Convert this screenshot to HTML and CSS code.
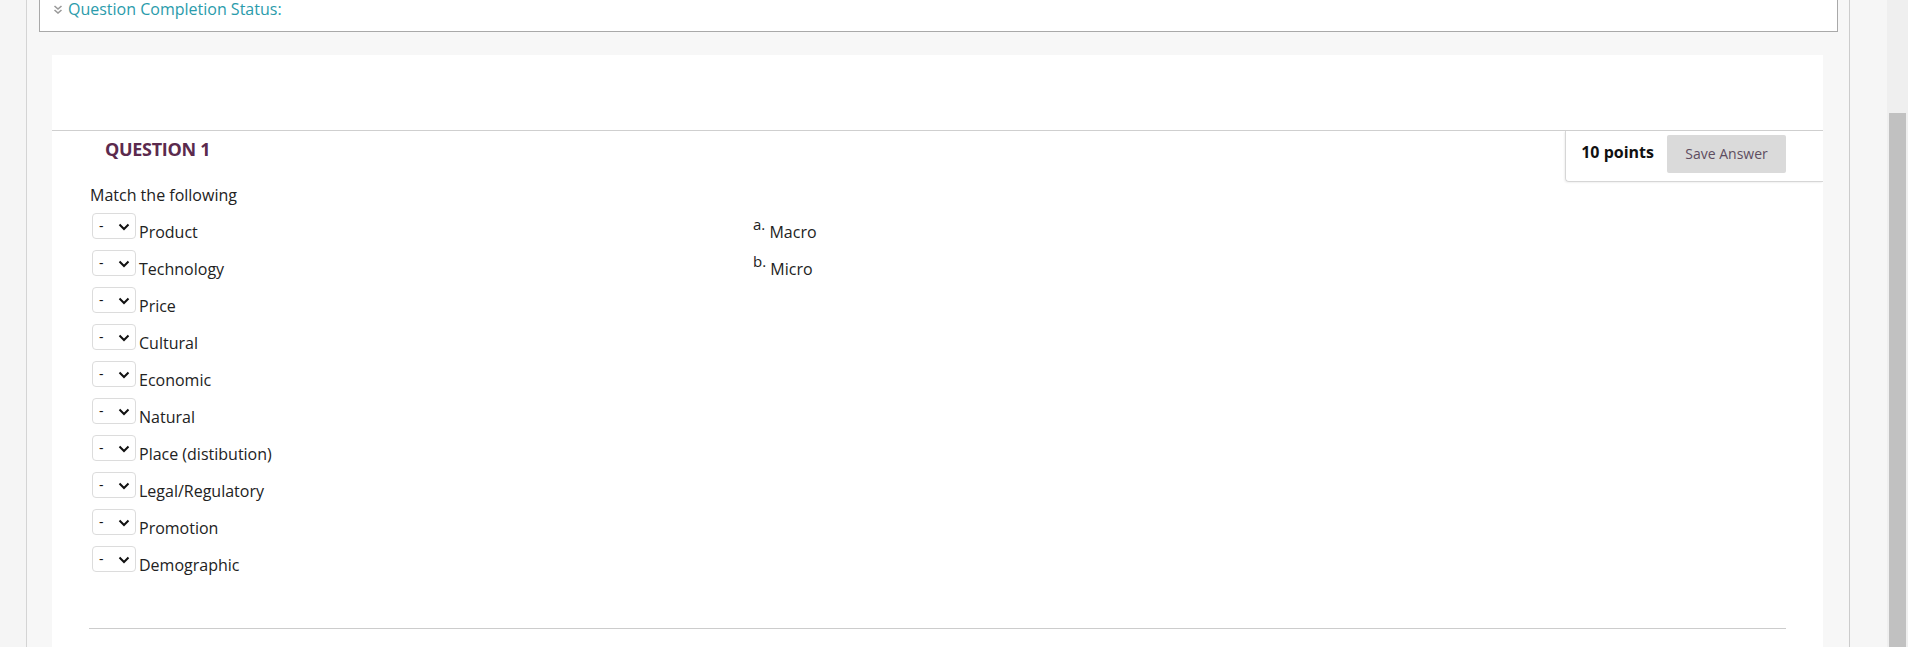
FILE: index.html
```html
<!DOCTYPE html>
<html lang="en">
<head>
<meta charset="utf-8">
<title>Question 1</title>
<link rel="stylesheet" href="styles.css">
</head>
<body>
<div class="frame">
  <div class="left-strip"></div>
  <main class="main">
    <div class="status-box">
      <div class="status-line">
        <svg class="status-icon" width="10" height="9" viewBox="0 0 10 9"><path d="M1.5 1 L5 4 L8.5 1 M1.5 5 L5 8 L8.5 5" fill="none" stroke="#9a9a9a" stroke-width="1.6"/></svg>
        <span class="status-text">Question Completion Status:</span>
      </div>
    </div>
    <section class="panel">
      <div class="panel-top"></div>
      <div class="qhead">
        <h2 class="qtitle">QUESTION 1</h2>
        <div class="points-box">
          <span class="points">10 points</span>
          <button class="save-btn" type="button">Save Answer</button>
        </div>
      </div>
      <div class="qbody">
        <p class="prompt">Match the following</p>
        <div class="match">
          <div class="col-left">
            <div class="row"><div class="sel"><span class="dash">-</span><svg class="chev" width="12" height="8" viewBox="0 0 12 8"><path d="M1.5 1.5 L6 6 L10.5 1.5" fill="none" stroke="#111" stroke-width="2"/></svg></div><span class="label">Product</span></div>
            <div class="row"><div class="sel"><span class="dash">-</span><svg class="chev" width="12" height="8" viewBox="0 0 12 8"><path d="M1.5 1.5 L6 6 L10.5 1.5" fill="none" stroke="#111" stroke-width="2"/></svg></div><span class="label">Technology</span></div>
            <div class="row"><div class="sel"><span class="dash">-</span><svg class="chev" width="12" height="8" viewBox="0 0 12 8"><path d="M1.5 1.5 L6 6 L10.5 1.5" fill="none" stroke="#111" stroke-width="2"/></svg></div><span class="label">Price</span></div>
            <div class="row"><div class="sel"><span class="dash">-</span><svg class="chev" width="12" height="8" viewBox="0 0 12 8"><path d="M1.5 1.5 L6 6 L10.5 1.5" fill="none" stroke="#111" stroke-width="2"/></svg></div><span class="label">Cultural</span></div>
            <div class="row"><div class="sel"><span class="dash">-</span><svg class="chev" width="12" height="8" viewBox="0 0 12 8"><path d="M1.5 1.5 L6 6 L10.5 1.5" fill="none" stroke="#111" stroke-width="2"/></svg></div><span class="label">Economic</span></div>
            <div class="row"><div class="sel"><span class="dash">-</span><svg class="chev" width="12" height="8" viewBox="0 0 12 8"><path d="M1.5 1.5 L6 6 L10.5 1.5" fill="none" stroke="#111" stroke-width="2"/></svg></div><span class="label">Natural</span></div>
            <div class="row"><div class="sel"><span class="dash">-</span><svg class="chev" width="12" height="8" viewBox="0 0 12 8"><path d="M1.5 1.5 L6 6 L10.5 1.5" fill="none" stroke="#111" stroke-width="2"/></svg></div><span class="label">Place (distibution)</span></div>
            <div class="row"><div class="sel"><span class="dash">-</span><svg class="chev" width="12" height="8" viewBox="0 0 12 8"><path d="M1.5 1.5 L6 6 L10.5 1.5" fill="none" stroke="#111" stroke-width="2"/></svg></div><span class="label">Legal/Regulatory</span></div>
            <div class="row"><div class="sel"><span class="dash">-</span><svg class="chev" width="12" height="8" viewBox="0 0 12 8"><path d="M1.5 1.5 L6 6 L10.5 1.5" fill="none" stroke="#111" stroke-width="2"/></svg></div><span class="label">Promotion</span></div>
            <div class="row"><div class="sel"><span class="dash">-</span><svg class="chev" width="12" height="8" viewBox="0 0 12 8"><path d="M1.5 1.5 L6 6 L10.5 1.5" fill="none" stroke="#111" stroke-width="2"/></svg></div><span class="label">Demographic</span></div>
          </div>
          <div class="col-right">
            <div class="row"><span class="label"><span class="letter">a.</span> Macro</span></div>
            <div class="row"><span class="label"><span class="letter">b.</span> Micro</span></div>
          </div>
        </div>
        <hr class="sep">
      </div>
    </section>
  </main>
  <div class="right-gutter"></div>
  <div class="scrollbar"><div class="thumb"></div></div>
</div>
</body>
</html>
```
FILE: styles.css
```css
* { box-sizing: border-box; }
html, body { margin: 0; padding: 0; height: 100%; overflow: hidden; }
body {
  font-family: "Open Sans", "Liberation Sans", sans-serif;
  color: #222;
  background: #f7f7f7;
}
.frame {
  display: flex;
  height: 647px;
}
.left-strip {
  width: 27px;
  flex: none;
  background: #f5f5f5;
  border-right: 1px solid #d4d4d4;
}
.main {
  flex: 1;
  min-width: 0;
  background: #f7f7f7;
  display: flex;
  flex-direction: column;
}
.status-box {
  margin: 0 11px 0 12px;
  height: 32px;
  background: #fff;
  border: 1px solid #a9a9a9;
  border-top: none;
}
.status-line {
  display: flex;
  align-items: center;
  margin-top: -2px;
  padding-left: 13px;
  height: 22px;
}
.status-icon { flex: none; margin-right: 5px; margin-top: 1px; }
.status-text {
  font-size: 16px;
  line-height: 22px;
  color: #2a9bab;
}
.panel {
  margin: 23px 26px 0 25px;
  background: #fff;
  flex: 1;
}
.panel-top {
  height: 76px;
  border-bottom: 1px solid #cfcfcf;
}
.qhead {
  display: flex;
  justify-content: space-between;
  align-items: flex-start;
  padding-left: 53px;
}
.qtitle {
  margin: 6px 0 0;
  font-size: 18px;
  line-height: 24px;
  font-weight: 700;
  color: #5b2a4d;
  letter-spacing: -0.3px;
}
.points-box {
  display: flex;
  align-items: flex-start;
  gap: 13px;
  padding: 4px 37px 8px 15px;
  border-left: 1px solid #d6d6d6;
  border-bottom: 1px solid #d6d6d6;
  border-bottom-left-radius: 4px;
  box-shadow: -1px 1px 2px rgba(0,0,0,0.06);
}
.points {
  margin-top: 6px;
  font-size: 16px;
  line-height: 22px;
  font-weight: 700;
  color: #111;
}
.save-btn {
  width: 119px;
  height: 38px;
  padding: 0;
  border: none;
  border-radius: 2px;
  background: #dadada;
  font-family: "Open Sans", "Liberation Sans", sans-serif;
  font-size: 14px;
  line-height: 38px;
  color: #5e4d60;
}
.qbody {
  padding: 2px 37px 0 37px;
}
.prompt {
  margin: 0 0 7px 1px;
  font-size: 16px;
  line-height: 22px;
}
.match {
  display: grid;
  grid-template-columns: 664px 1fr;
}
.row {
  display: flex;
  align-items: flex-start;
  height: 30px;
  margin-bottom: 7px;
}
.sel {
  position: relative;
  margin-left: 3px;
  width: 44px;
  height: 26px;
  border: 1px solid #dcdcdc;
  border-radius: 4px;
  background: #fff;
  flex: none;
}
.dash {
  position: absolute;
  left: 6px;
  top: 0;
  font-size: 14px;
  line-height: 24px;
  color: #111;
}
.chev {
  position: absolute;
  left: 25px;
  top: 9px;
}
.label {
  padding-top: 8px;
  margin-left: 3px;
  font-size: 16px;
  line-height: 22px;
  color: #222;
}
.col-right .label { margin-left: 0; }
.letter {
  position: relative;
  top: -8px;
  font-size: 15px;
}
.sep {
  margin: 45px 0 0 0;
  border: none;
  border-top: 1px solid #cccccc;
  height: 0;
}
.right-gutter {
  width: 38px;
  flex: none;
  background: #f6f6f6;
  border-left: 1px solid #cccccc;
}
.scrollbar {
  width: 21px;
  flex: none;
  background: #efefef;
  padding: 113px 2px 0 2px;
}
.thumb {
  height: 560px;
  background: #c1c1c1;
}
```
